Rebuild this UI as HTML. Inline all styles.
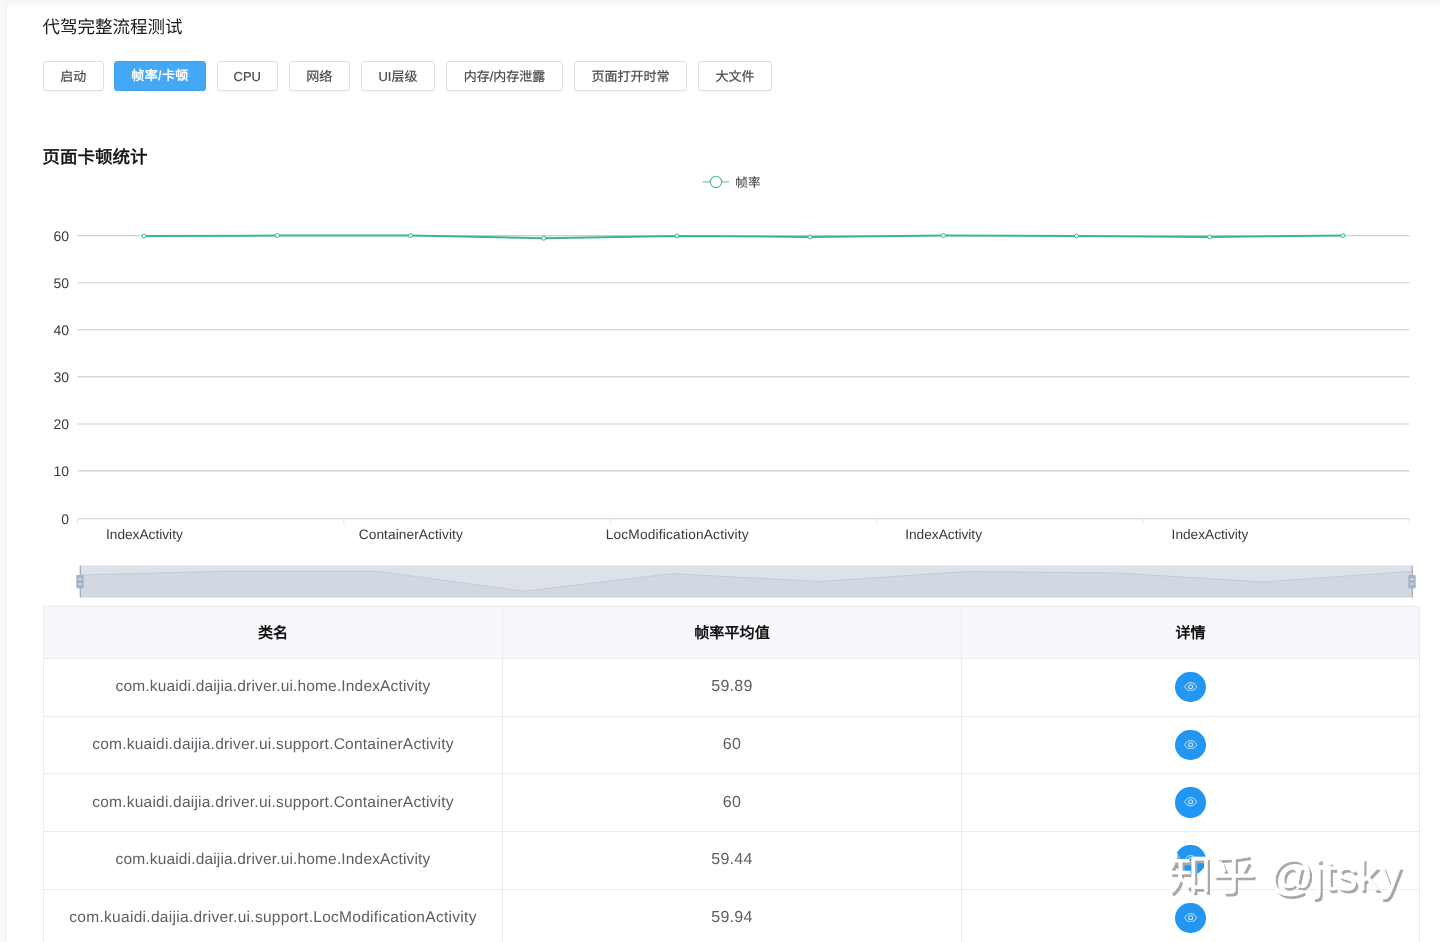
<!DOCTYPE html>
<html lang="zh-CN">
<head>
<meta charset="utf-8">
<title>代驾完整流程测试</title>
<style>
*{box-sizing:border-box;margin:0;padding:0}
html,body{width:1440px;height:942px;overflow:hidden;background:#fff}
body{position:relative;will-change:transform;text-rendering:geometricPrecision;font-family:"Liberation Sans",sans-serif;color:#222}
.topg{position:absolute;left:0;top:0;width:1440px;height:9px;background:linear-gradient(#f4f4f4,#fff)}
.leftg{position:absolute;left:0;top:0;width:6.5px;height:942px;background:linear-gradient(90deg,#fafafa 0,#f8f8f8 70%,#f1f1f1 100%)}
.title{position:absolute;left:42.4px;top:14.5px;height:25px;line-height:25px;font-size:17.5px;color:#1a1a1a;white-space:nowrap}
.h2{position:absolute;left:42.4px;top:145.2px;height:25px;line-height:25px;font-size:17.5px;font-weight:500;-webkit-text-stroke:0.55px #111;color:#111;white-space:nowrap}
.btn{position:absolute;top:61px;height:30px;line-height:28px;padding-top:1px;-webkit-text-stroke:0.2px;border:1px solid #dedede;border-radius:3px;background:#fff;color:#4a4a4a;font-size:13px;text-align:center;white-space:nowrap;box-shadow:0 1px 1px rgba(0,0,0,.03)}
.btn.on{background:#43a9f7;border-color:#419fe9;color:#fff;font-weight:700;letter-spacing:0.35px;padding-top:0.3px;-webkit-text-stroke:0}
.chart{position:absolute;left:0;top:0}
.ax{text-rendering:geometricPrecision;font-family:"Liberation Sans",sans-serif;font-size:14px;fill:#3a3a3a}
.xl{font-size:13.7px}
.lg{text-rendering:geometricPrecision;font-family:"Liberation Sans",sans-serif;font-size:12.6px;fill:#333}
.tbl{position:absolute;left:43px;top:606px;width:1377px;border-left:1px solid #ececef;border-top:1px solid #ececef}
.tr{display:grid;grid-template-columns:459px 459px 458px;height:57.7px}
.tr.th{height:52px;background:#f7f8fc;color:#111;font-weight:700}
.td{border-right:1px solid #ececef;border-bottom:1px solid #ececef;display:flex;align-items:center;justify-content:center;font-size:15.5px;letter-spacing:0.16px;color:#5b5f66;white-space:nowrap;padding-bottom:0px}
.td:nth-child(2){font-size:16px;letter-spacing:0.3px}
.td:nth-child(3){padding-bottom:0}
.th .td{color:#111;font-size:15.1px;letter-spacing:0;padding-bottom:1px}
.eye{width:30.3px;height:30.3px;margin-bottom:0.6px;border-radius:50%;background:#2196f3;display:flex;align-items:center;justify-content:center}
.wm{position:absolute;left:1167.7px;top:847.8px;font-size:43.8px;word-spacing:1.6px;line-height:56px;color:#fff;text-shadow:2.5px 2.5px 0.6px #a8a8a8;-webkit-text-stroke:0.4px #fff;white-space:nowrap;letter-spacing:0}
</style>
</head>
<body>
<div class="topg"></div>
<div class="leftg"></div>
<div class="title">代驾完整流程测试</div>
<div class="btn" style="left:43px;width:60.5px">启动</div>
<div class="btn on" style="left:114px;width:92px">帧率/卡顿</div>
<div class="btn" style="left:217px;width:60.5px">CPU</div>
<div class="btn" style="left:289px;width:60.5px">网络</div>
<div class="btn" style="left:361px;width:74px">UI层级</div>
<div class="btn" style="left:446px;width:117px">内存/内存泄露</div>
<div class="btn" style="left:574px;width:113px">页面打开时常</div>
<div class="btn" style="left:698px;width:74px">大文件</div>
<div class="h2">页面卡顿统计</div>
<svg class="chart" width="1440" height="620" viewBox="0 0 1440 620">
<line x1="77.5" x2="1409.5" y1="518.80" y2="518.80" stroke="#cdcdcd" stroke-width="1.1"/>
<text x="69" y="523.70" text-anchor="end" class="ax">0</text>
<line x1="77.5" x2="1409.5" y1="470.90" y2="470.90" stroke="#cdcdcd" stroke-width="1.1"/>
<text x="69" y="475.80" text-anchor="end" class="ax">10</text>
<line x1="77.5" x2="1409.5" y1="424.00" y2="424.00" stroke="#cdcdcd" stroke-width="1.1"/>
<text x="69" y="428.90" text-anchor="end" class="ax">20</text>
<line x1="77.5" x2="1409.5" y1="376.90" y2="376.90" stroke="#cdcdcd" stroke-width="1.1"/>
<text x="69" y="381.80" text-anchor="end" class="ax">30</text>
<line x1="77.5" x2="1409.5" y1="329.80" y2="329.80" stroke="#cdcdcd" stroke-width="1.1"/>
<text x="69" y="334.70" text-anchor="end" class="ax">40</text>
<line x1="77.5" x2="1409.5" y1="282.70" y2="282.70" stroke="#cdcdcd" stroke-width="1.1"/>
<text x="69" y="287.60" text-anchor="end" class="ax">50</text>
<line x1="77.5" x2="1409.5" y1="235.60" y2="235.60" stroke="#cdcdcd" stroke-width="1.1"/>
<text x="69" y="240.50" text-anchor="end" class="ax">60</text>
<line x1="77.50" x2="77.50" y1="518.8" y2="524.3" stroke="#e9e9e9" stroke-width="1"/>
<line x1="343.90" x2="343.90" y1="518.8" y2="524.3" stroke="#e9e9e9" stroke-width="1"/>
<line x1="610.30" x2="610.30" y1="518.8" y2="524.3" stroke="#e9e9e9" stroke-width="1"/>
<line x1="876.70" x2="876.70" y1="518.8" y2="524.3" stroke="#e9e9e9" stroke-width="1"/>
<line x1="1143.10" x2="1143.10" y1="518.8" y2="524.3" stroke="#e9e9e9" stroke-width="1"/>
<line x1="1409.50" x2="1409.50" y1="518.8" y2="524.3" stroke="#e9e9e9" stroke-width="1"/>
<text x="144.40" y="538.8" text-anchor="middle" class="ax xl" letter-spacing="0">IndexActivity</text>
<text x="410.80" y="538.8" text-anchor="middle" class="ax xl" letter-spacing="0.08">ContainerActivity</text>
<text x="677.20" y="538.8" text-anchor="middle" class="ax xl" letter-spacing="0.2">LocModificationActivity</text>
<text x="943.60" y="538.8" text-anchor="middle" class="ax xl" letter-spacing="0">IndexActivity</text>
<text x="1210.00" y="538.8" text-anchor="middle" class="ax xl" letter-spacing="0">IndexActivity</text>
<path d="M144.10,236.12 L277.30,235.60 L410.50,235.60 L543.70,238.24 L676.90,235.88 L810.10,236.92 L943.30,235.60 L1076.50,236.07 L1209.70,236.92 L1342.90,235.60" fill="none" stroke="#37b797" stroke-width="2" stroke-linejoin="round"/>
<circle cx="144.10" cy="236.12" r="2.0" fill="#fff" stroke="#37b797" stroke-width="1"/>
<circle cx="277.30" cy="235.60" r="2.0" fill="#fff" stroke="#37b797" stroke-width="1"/>
<circle cx="410.50" cy="235.60" r="2.0" fill="#fff" stroke="#37b797" stroke-width="1"/>
<circle cx="543.70" cy="238.24" r="2.0" fill="#fff" stroke="#37b797" stroke-width="1"/>
<circle cx="676.90" cy="235.88" r="2.0" fill="#fff" stroke="#37b797" stroke-width="1"/>
<circle cx="810.10" cy="236.92" r="2.0" fill="#fff" stroke="#37b797" stroke-width="1"/>
<circle cx="943.30" cy="235.60" r="2.0" fill="#fff" stroke="#37b797" stroke-width="1"/>
<circle cx="1076.50" cy="236.07" r="2.0" fill="#fff" stroke="#37b797" stroke-width="1"/>
<circle cx="1209.70" cy="236.92" r="2.0" fill="#fff" stroke="#37b797" stroke-width="1"/>
<circle cx="1342.90" cy="235.60" r="2.0" fill="#fff" stroke="#37b797" stroke-width="1"/>
<line x1="702.5" x2="729" y1="181.9" y2="181.9" stroke="#6fc2ae" stroke-width="1.15"/>
<circle cx="716" cy="181.9" r="5.7" fill="#fff" stroke="#56b9a1" stroke-width="1.15"/>
<text x="735.3" y="186.9" class="lg">帧率</text>
<rect x="80" y="565.5" width="1332" height="32.0" fill="#dde2ea"/>
<polygon points="80,597.5 80.0,575 228.0,571.2 376.0,571.2 524.0,591.2 672.0,573.7 820.0,581.5 968.0,571.5 1116.0,573 1264.0,582 1412.0,571.3 1412,597.5" fill="#d1d8e1"/>
<polyline points="80.0,575 228.0,571.2 376.0,571.2 524.0,591.2 672.0,573.7 820.0,581.5 968.0,571.5 1116.0,573 1264.0,582 1412.0,571.3" fill="none" stroke="#c3ccd8" stroke-width="1"/>
<line x1="80.3" x2="80.3" y1="565.5" y2="597.5" stroke="#9ea9b8" stroke-width="1.2"/>
<rect x="76.3" y="575" width="7.4" height="13.3" rx="1" fill="#a3b3c8"/>
<rect x="78.4" y="578.6" width="3.2" height="1.3" fill="#e8edf3"/>
<rect x="78.4" y="583.4" width="3.2" height="1.3" fill="#e8edf3"/>
<line x1="1412.3" x2="1412.3" y1="565.5" y2="597.5" stroke="#9ea9b8" stroke-width="1.2"/>
<rect x="1408.3" y="575" width="7.4" height="13.3" rx="1" fill="#a3b3c8"/>
<rect x="1410.4" y="578.6" width="3.2" height="1.3" fill="#e8edf3"/>
<rect x="1410.4" y="583.4" width="3.2" height="1.3" fill="#e8edf3"/>
</svg>
<div class="tbl">
<div class="tr th"><div class="td">类名</div><div class="td">帧率平均值</div><div class="td">详情</div></div>
<div class="tr"><div class="td" style="letter-spacing:0.16px">com.kuaidi.daijia.driver.ui.home.IndexActivity</div><div class="td">59.89</div><div class="td"><span class="eye"><svg width="13.3" height="9.5" viewBox="0 0 14 10" style="position:relative;left:-0.2px;top:-0.4px"><path d="M0.6,5 C2.4,1.9 4.6,0.6 7,0.6 C9.4,0.6 11.6,1.9 13.4,5 C11.6,8.1 9.4,9.4 7,9.4 C4.6,9.4 2.4,8.1 0.6,5 Z" fill="none" stroke="#cde7fc" stroke-width="1.05"/><circle cx="7" cy="5" r="2.1" fill="none" stroke="#d6ebfd" stroke-width="1.1"/></svg></span></div></div>
<div class="tr"><div class="td" style="letter-spacing:0.22px">com.kuaidi.daijia.driver.ui.support.ContainerActivity</div><div class="td">60</div><div class="td"><span class="eye"><svg width="13.3" height="9.5" viewBox="0 0 14 10" style="position:relative;left:-0.2px;top:-0.4px"><path d="M0.6,5 C2.4,1.9 4.6,0.6 7,0.6 C9.4,0.6 11.6,1.9 13.4,5 C11.6,8.1 9.4,9.4 7,9.4 C4.6,9.4 2.4,8.1 0.6,5 Z" fill="none" stroke="#cde7fc" stroke-width="1.05"/><circle cx="7" cy="5" r="2.1" fill="none" stroke="#d6ebfd" stroke-width="1.1"/></svg></span></div></div>
<div class="tr"><div class="td" style="letter-spacing:0.22px">com.kuaidi.daijia.driver.ui.support.ContainerActivity</div><div class="td">60</div><div class="td"><span class="eye"><svg width="13.3" height="9.5" viewBox="0 0 14 10" style="position:relative;left:-0.2px;top:-0.4px"><path d="M0.6,5 C2.4,1.9 4.6,0.6 7,0.6 C9.4,0.6 11.6,1.9 13.4,5 C11.6,8.1 9.4,9.4 7,9.4 C4.6,9.4 2.4,8.1 0.6,5 Z" fill="none" stroke="#cde7fc" stroke-width="1.05"/><circle cx="7" cy="5" r="2.1" fill="none" stroke="#d6ebfd" stroke-width="1.1"/></svg></span></div></div>
<div class="tr"><div class="td" style="letter-spacing:0.16px">com.kuaidi.daijia.driver.ui.home.IndexActivity</div><div class="td">59.44</div><div class="td"><span class="eye"><svg width="13.3" height="9.5" viewBox="0 0 14 10" style="position:relative;left:-0.2px;top:-0.4px"><path d="M0.6,5 C2.4,1.9 4.6,0.6 7,0.6 C9.4,0.6 11.6,1.9 13.4,5 C11.6,8.1 9.4,9.4 7,9.4 C4.6,9.4 2.4,8.1 0.6,5 Z" fill="none" stroke="#cde7fc" stroke-width="1.05"/><circle cx="7" cy="5" r="2.1" fill="none" stroke="#d6ebfd" stroke-width="1.1"/></svg></span></div></div>
<div class="tr"><div class="td" style="letter-spacing:0.29px">com.kuaidi.daijia.driver.ui.support.LocModificationActivity</div><div class="td">59.94</div><div class="td"><span class="eye"><svg width="13.3" height="9.5" viewBox="0 0 14 10" style="position:relative;left:-0.2px;top:-0.4px"><path d="M0.6,5 C2.4,1.9 4.6,0.6 7,0.6 C9.4,0.6 11.6,1.9 13.4,5 C11.6,8.1 9.4,9.4 7,9.4 C4.6,9.4 2.4,8.1 0.6,5 Z" fill="none" stroke="#cde7fc" stroke-width="1.05"/><circle cx="7" cy="5" r="2.1" fill="none" stroke="#d6ebfd" stroke-width="1.1"/></svg></span></div></div>
</div>
<div class="wm">知乎 @jtsky</div>
</body>
</html>
